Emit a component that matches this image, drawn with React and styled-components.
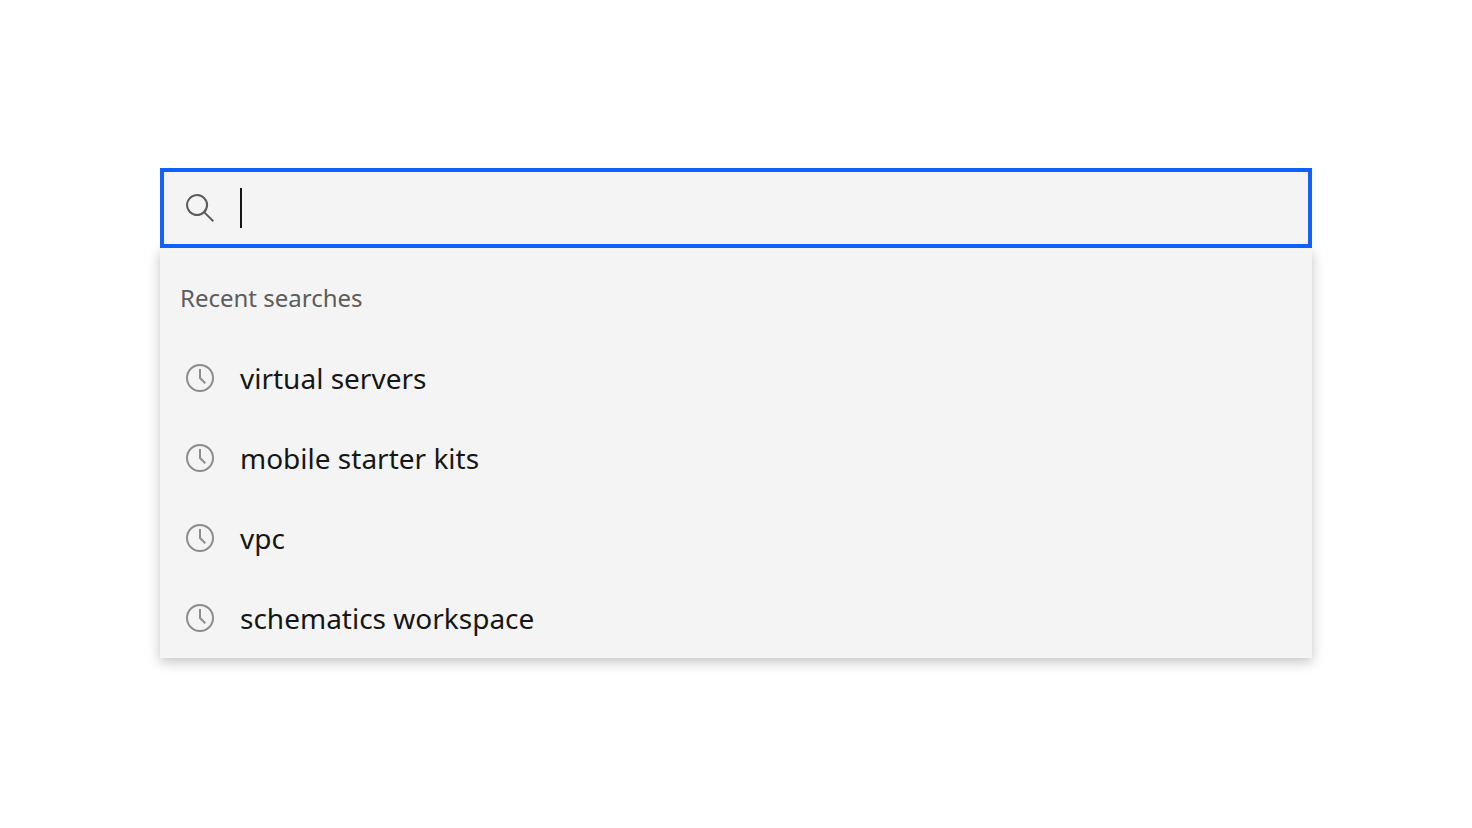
import React, { useState } from "react";
import styled, { createGlobalStyle } from "styled-components";

const GlobalStyle = createGlobalStyle`
  * {
    box-sizing: border-box;
  }

  body {
    margin: 0;
    background-color: #ffffff;
    font-family: "Noto Sans", sans-serif;
  }
`;

const Page = styled.main`
  padding: 168px 160px;
`;

const SearchBar = styled.div`
  position: relative;
  z-index: 1;
  display: flex;
  align-items: center;
  height: 80px;
  padding-left: 20px;
  background-color: #f4f4f4;
  border: 4px solid #0f62fe;
`;

const Icon = styled.svg`
  flex: none;
  width: 32px;
  height: 32px;
  fill: ${({ $color }) => $color};
`;

const Field = styled.div`
  position: relative;
  flex: 1;
  margin-left: 24px;
`;

const Input = styled.input`
  display: block;
  width: 100%;
  height: 40px;
  padding: 0;
  border: none;
  outline: none;
  background: transparent;
  color: #161616;
  font-family: inherit;
  font-size: 28px;
  caret-color: ${({ value }) => (value ? "#161616" : "transparent")};
`;

const Caret = styled.span`
  position: absolute;
  top: 0;
  left: 0;
  width: 2px;
  height: 40px;
  background-color: #161616;
  pointer-events: none;
`;

const Menu = styled.section`
  background-color: #f4f4f4;
  box-shadow: 0 4px 12px rgba(0, 0, 0, 0.24);
`;

const Heading = styled.h2`
  margin: 0;
  padding: 30px 20px 20px;
  color: #5c5c5c;
  font-size: 24px;
  font-weight: 400;
  line-height: 40px;
`;

const List = styled.ul`
  margin: 0;
  padding: 0;
  list-style: none;
`;

const Item = styled.button`
  display: flex;
  align-items: center;
  gap: 24px;
  width: 100%;
  height: 80px;
  padding: 0 24px;
  border: none;
  background: transparent;
  color: #161616;
  font-family: inherit;
  font-size: 28px;
  line-height: 40px;
  text-align: left;
  cursor: pointer;

  &:hover {
    background-color: #e5e5e5;
  }
`;

const recentSearches = [
  "virtual servers",
  "mobile starter kits",
  "vpc",
  "schematics workspace",
];

const SearchIcon = () => (
  <Icon $color="#5c5c5c" viewBox="0 0 32 32" aria-hidden="true">
    <path d="M30,28.5859l-8.4487-8.4492a11.0177,11.0177,0,1,0-1.4141,1.4141L28.5859,30ZM4,13a9,9,0,1,1,9,9A9.01,9.01,0,0,1,4,13Z" />
  </Icon>
);

const TimeIcon = () => (
  <Icon $color="#8d8d8d" viewBox="0 0 32 32" aria-hidden="true">
    <path d="M16,30A14,14,0,1,1,30,16,14,14,0,0,1,16,30ZM16,4A12,12,0,1,0,28,16,12,12,0,0,0,16,4Z" />
    <path d="M20.59,22,15,16.41V7h2v8.58l5,5.01Z" />
  </Icon>
);

const App = () => {
  const [query, setQuery] = useState("");

  return (
    <>
      <GlobalStyle />
      <Page>
        <SearchBar role="search">
          <SearchIcon />
          <Field>
            <Input
              type="text"
              aria-label="Search"
              autoComplete="off"
              autoFocus
              value={query}
              onChange={(e) => setQuery(e.target.value)}
            />
            {!query && <Caret />}
          </Field>
        </SearchBar>
        <Menu aria-labelledby="recent-searches">
          <Heading id="recent-searches">Recent searches</Heading>
          <List>
            {recentSearches.map((search) => (
              <li key={search}>
                <Item type="button" onClick={() => setQuery(search)}>
                  <TimeIcon />
                  {search}
                </Item>
              </li>
            ))}
          </List>
        </Menu>
      </Page>
    </>
  );
};

export default App;
